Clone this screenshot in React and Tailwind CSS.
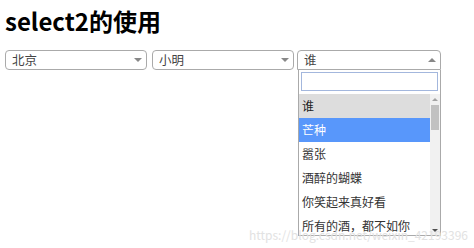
import React from "react";

const options = ["谁", "芒种", "嚣张", "酒醉的蝴蝶", "你笑起来真好看", "所有的酒，都不如你"];

function Arrow({ up = false, color = "#888" }) {
  return (
    <span
      className="inline-block h-0 w-0 border-x-[4px] border-x-transparent"
      style={up ? { borderBottom: `4px solid ${color}` } : { borderTop: `4px solid ${color}` }}
    />
  );
}

function Select({ value, className = "" }) {
  return (
    <div
      className={`flex h-[20px] items-center justify-between rounded-[4px] border border-[#aaa] bg-white pl-[6px] pr-[4px] text-[12.5px] text-[#444] ${className}`}
    >
      <span className="leading-none">{value}</span>
      <Arrow />
    </div>
  );
}

export default function App() {
  return (
    <div
      className="relative h-[248px] w-[474px] overflow-hidden bg-white"
      style={{ fontFamily: '"Noto Sans CJK SC", "Noto Sans", sans-serif' }}
    >
      <h2 className="ml-[5px] mt-[3px] h-[36px] text-[24px] font-bold leading-[36px] text-black">
        select2的使用
      </h2>
      <div className="mt-[11px] flex">
        <Select value="北京" className="ml-[5px] w-[142px]" />
        <Select value="小明" className="ml-[5px] w-[142px]" />
        <div className="relative ml-[3px] w-[144px]">
          <div className="flex h-[20px] items-center justify-between rounded-t-[4px] border border-[#aaa] bg-white pl-[6px] pr-[4px] text-[12.5px] text-[#444]">
            <span className="leading-none">谁</span>
            <Arrow up />
          </div>
          <div className="absolute left-[1px] top-[20px] z-10 w-[143px] border border-t-0 border-[#aaa] bg-white">
            <div className="px-[2px] pb-[3px] pt-[2px]">
              <div className="h-[19px] w-full border border-[#a3b7dd] bg-white" />
            </div>
            <div className="flex h-[141px] overflow-hidden">
              <div className="flex-1">
                {options.map((o, i) => (
                  <div
                    key={o}
                    className={`flex h-[24px] items-center pl-[3px] text-[12px] ${
                      i === 0 ? "bg-[#ddd] text-[#222]" : i === 1 ? "bg-[#5897fb] text-white" : "text-[#333]"
                    }`}
                  >
                    {o}
                  </div>
                ))}
              </div>
              <div className="flex w-[10px] flex-col items-center bg-[#f1f1f1]">
                <div className="flex h-[10px] items-center">
                  <span className="inline-block h-0 w-0 border-x-[3px] border-b-[3px] border-x-transparent border-b-[#a3a3a3]" />
                </div>
                <div className="mt-[1px] h-[25px] w-[8px] bg-[#c1c1c1]" />
                <div className="flex-1" />
                <div className="flex h-[10px] items-center">
                  <span className="inline-block h-0 w-0 border-x-[3px] border-t-[3px] border-x-transparent border-t-[#505050]" />
                </div>
              </div>
            </div>
          </div>
        </div>
      </div>
      <div className="absolute bottom-[7px] right-[6px] z-20 text-[12px] leading-none text-[#e2e2e2]">
        https://blog.csdn.net/weixin_42193396
      </div>
    </div>
  );
}
